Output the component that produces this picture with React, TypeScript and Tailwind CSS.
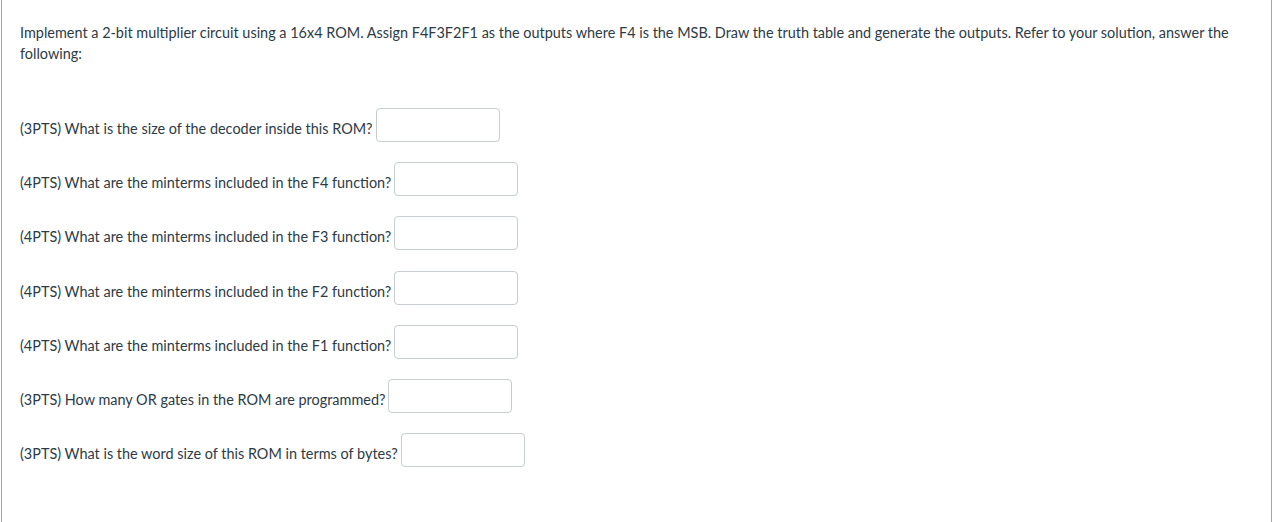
const QUESTIONS = [
  '(3PTS) What is the size of the decoder inside this ROM?',
  '(4PTS) What are the minterms included in the F4 function?',
  '(4PTS) What are the minterms included in the F3 function?',
  '(4PTS) What are the minterms included in the F2 function?',
  '(4PTS) What are the minterms included in the F1 function?',
  '(3PTS) How many OR gates in the ROM are programmed?',
  '(3PTS) What is the word size of this ROM in terms of bytes?',
];

export default function App() {
  return (
    <div
      className="h-[522px] w-full bg-white text-[#2d3b45] text-[14.45px] overflow-hidden"
      style={{ fontFamily: 'Lato, "Liberation Sans", sans-serif' }}
    >
      <div className="mx-[1px] h-full border-x border-[#a5a5a5] pl-[18px] pr-[40px] pt-[22px]">
        <p className="leading-[21px]">
          Implement a 2-bit multiplier circuit using a 16x4 ROM. Assign F4F3F2F1 as the outputs where F4 is the MSB.
          Draw the truth table and generate the outputs. Refer to your solution, answer the following:
        </p>

        <div className="mt-[44px] flex flex-col gap-[20.2px]">
          {QUESTIONS.map((q) => (
            <div key={q} className="flex items-center">
              <span className="mt-[7px] leading-[21px]">{q}</span>
              <input
                type="text"
                className="ml-[3px] h-[34px] w-[124px] rounded-[4px] border border-[#c7cdd1] bg-white px-2 outline-none"
              />
            </div>
          ))}
        </div>
      </div>
    </div>
  );
}
